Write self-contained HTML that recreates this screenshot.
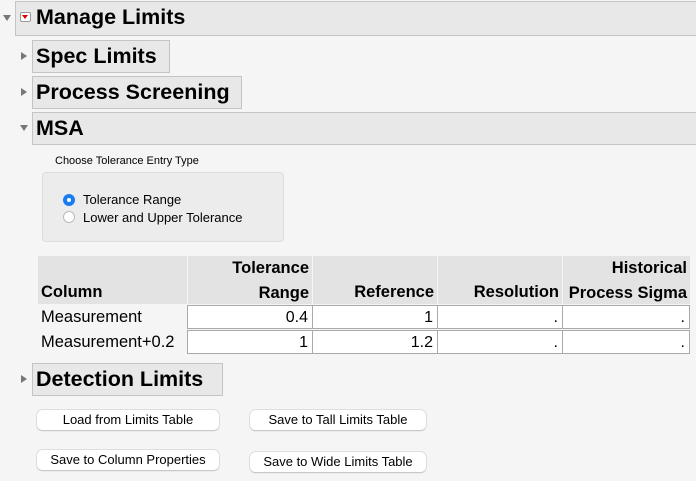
<!DOCTYPE html>
<html><head><style>
body{margin:0;width:696px;height:481px;background:#f5f5f5;font-family:"Liberation Sans",sans-serif;position:relative;overflow:hidden;color:#000}
.a{position:absolute}
.hd{position:absolute;background:#e8e8e8;border:1px solid #c4c4c4;box-sizing:border-box;font-weight:bold;font-size:21.5px;line-height:31px;padding-left:3px;white-space:nowrap}
.tri{position:absolute;width:0;height:0}
.r{border-top:4px solid transparent;border-bottom:4px solid transparent;border-left:6px solid #777}
.d{border-left:4px solid transparent;border-right:4px solid transparent;border-top:6px solid #777}
.th{position:absolute;background:#e3e3e3;font-weight:bold;font-size:16.5px;text-align:right;box-sizing:border-box;padding-right:3px;line-height:25px}
.td{position:absolute;background:#fff;border:1px solid #a9a9a9;box-sizing:border-box;text-align:right;padding-right:4px;font-size:16px;line-height:23px}
.btn{position:absolute;background:#fff;border-radius:5px;box-shadow:0 0 0 0.5px #c8c8c8,0 1px 1px rgba(0,0,0,.25);font-size:13px;text-align:center;line-height:20px;height:20px}
</style></head><body>
<div class="tri d" style="left:3px;top:15px"></div>
<div class="hd" style="left:15px;top:1px;width:690px;height:35px;padding-left:20px">Manage Limits</div>
<div class="a" style="left:20px;top:12px;width:11px;height:10px;background:#fff;border:1px solid #999;box-sizing:border-box;border-radius:2px"></div>
<div class="tri" style="left:22px;top:15px;border-left:3.5px solid transparent;border-right:3.5px solid transparent;border-top:4px solid #d00"></div>

<div class="tri r" style="left:21px;top:52px"></div>
<div class="hd" style="left:32px;top:40px;width:138px;height:33px">Spec Limits</div>
<div class="tri r" style="left:21px;top:88px"></div>
<div class="hd" style="left:32px;top:76px;width:210px;height:33px">Process Screening</div>
<div class="tri d" style="left:20px;top:125px"></div>
<div class="hd" style="left:32px;top:112px;width:680px;height:33px">MSA</div>

<div class="a" style="left:55px;top:155px;font-size:11px">Choose Tolerance Entry Type</div>
<div class="a" style="left:42px;top:172px;width:242px;height:70px;background:#ececec;border:1px solid #ddd;border-radius:4px;box-sizing:border-box"></div>
<div class="a" style="left:63px;top:194px;width:12px;height:12px;border-radius:50%;background:#1a7cf5"></div>
<div class="a" style="left:67px;top:198px;width:4px;height:4px;border-radius:50%;background:#fff"></div>
<div class="a" style="left:63px;top:211px;width:12px;height:12px;border-radius:50%;background:#fff;border:1px solid #bbb;box-sizing:border-box"></div>
<div class="a" style="left:83px;top:192px;font-size:13px">Tolerance Range</div>
<div class="a" style="left:83px;top:210px;font-size:13px">Lower and Upper Tolerance</div>

<div class="th" style="left:38px;top:256px;width:149px;height:48px;text-align:left;padding-left:3px;padding-top:24px">Column</div>
<div class="th" style="left:188px;top:256px;width:124px;height:48px">Tolerance<br>Range</div>
<div class="th" style="left:313px;top:256px;width:124px;height:48px;padding-top:24px">Reference</div>
<div class="th" style="left:438px;top:256px;width:124px;height:48px;padding-top:24px">Resolution</div>
<div class="th" style="left:563px;top:256px;width:127px;height:48px">Historical<br>Process Sigma</div>

<div class="a" style="left:41px;top:308px;font-size:16.5px">Measurement</div>
<div class="a" style="left:41px;top:333px;font-size:16.5px">Measurement+0.2</div>
<div class="td" style="left:187px;top:305px;width:126px;height:24px">0.4</div>
<div class="td" style="left:312px;top:305px;width:126px;height:24px">1</div>
<div class="td" style="left:437px;top:305px;width:126px;height:24px">.</div>
<div class="td" style="left:562px;top:305px;width:128px;height:24px">.</div>
<div class="td" style="left:187px;top:330px;width:126px;height:24px">1</div>
<div class="td" style="left:312px;top:330px;width:126px;height:24px">1.2</div>
<div class="td" style="left:437px;top:330px;width:126px;height:24px">.</div>
<div class="td" style="left:562px;top:330px;width:128px;height:24px">.</div>

<div class="tri r" style="left:21px;top:375px"></div>
<div class="hd" style="left:32px;top:363px;width:191px;height:33px">Detection Limits</div>

<div class="btn" style="left:37px;top:410px;width:182px">Load from Limits Table</div>
<div class="btn" style="left:250px;top:410px;width:176px">Save to Tall Limits Table</div>
<div class="btn" style="left:37px;top:450px;width:182px">Save to Column Properties</div>
<div class="btn" style="left:250px;top:452px;width:176px">Save to Wide Limits Table</div>
</body></html>
